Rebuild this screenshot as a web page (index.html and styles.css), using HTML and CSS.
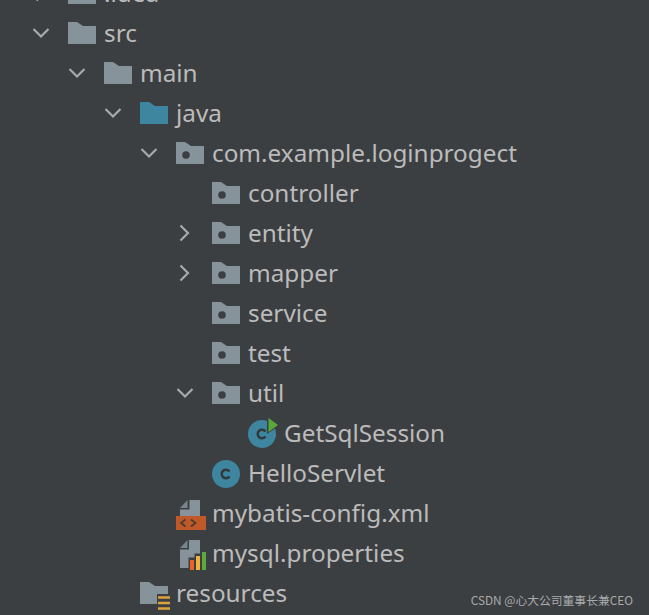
FILE: index.html
```html
<!DOCTYPE html>
<html lang="en">
<head>
    <meta charset="UTF-8">
    <meta name="viewport" content="width=device-width, initial-scale=1.0">
    <title>Project tree</title>
    <link rel="stylesheet" href="styles.css">
</head>
<body>
    <svg class="defs" width="0" height="0">
        <symbol id="down" viewBox="0 0 18 12"><path d="M1.500 2 9 9.500 16.500 2" fill="none" stroke="currentColor" stroke-width="2.200"/></symbol>
        <symbol id="right" viewBox="0 0 12 18"><path d="M1.500 1.500 9 9 1.500 16.500" fill="none" stroke="currentColor" stroke-width="2.200"/></symbol>
        <symbol id="folder" viewBox="0 0 28 22"><path d="M0 0H9L15 4H28V22H0Z" fill="currentColor"/></symbol>
        <symbol id="package" viewBox="0 0 28 22"><path d="M0 0H9L15 4H28V22H0Z" fill="currentColor"/><circle cx="10" cy="13" r="3.800" fill="#3c3f41"/></symbol>
        <symbol id="class" viewBox="0 0 28 28"><circle cx="14" cy="14" r="14" fill="#3e86a0"/><path d="M17.500 11.500A4.300 4.300 0 1 0 17.500 16.500" fill="none" stroke="#33383b" stroke-width="2.500"/></symbol>
    </svg>

    <ul class="tree">
        <li class="row" style="padding-left: 32px"><svg class="chevron-right"><use href="#right"/></svg><svg class="folder"><use href="#folder"/></svg><span>.idea</span></li>
        <li class="row" style="padding-left: 32px"><svg class="chevron-down"><use href="#down"/></svg><svg class="folder"><use href="#folder"/></svg><span>src</span></li>
        <li class="row" style="padding-left: 68px"><svg class="chevron-down"><use href="#down"/></svg><svg class="folder"><use href="#folder"/></svg><span>main</span></li>
        <li class="row" style="padding-left: 104px"><svg class="chevron-down"><use href="#down"/></svg><svg class="folder blue"><use href="#folder"/></svg><span>java</span></li>
        <li class="row" style="padding-left: 140px"><svg class="chevron-down"><use href="#down"/></svg><svg class="folder"><use href="#package"/></svg><span>com.example.loginprogect</span></li>
        <li class="row" style="padding-left: 176px"><i class="no-chevron"></i><svg class="folder"><use href="#package"/></svg><span>controller</span></li>
        <li class="row" style="padding-left: 176px"><svg class="chevron-right"><use href="#right"/></svg><svg class="folder"><use href="#package"/></svg><span>entity</span></li>
        <li class="row" style="padding-left: 176px"><svg class="chevron-right"><use href="#right"/></svg><svg class="folder"><use href="#package"/></svg><span>mapper</span></li>
        <li class="row" style="padding-left: 176px"><i class="no-chevron"></i><svg class="folder"><use href="#package"/></svg><span>service</span></li>
        <li class="row" style="padding-left: 176px"><i class="no-chevron"></i><svg class="folder"><use href="#package"/></svg><span>test</span></li>
        <li class="row" style="padding-left: 176px"><svg class="chevron-down"><use href="#down"/></svg><svg class="folder"><use href="#package"/></svg><span>util</span></li>
        <li class="row" style="padding-left: 212px"><i class="no-chevron"></i>
            <svg class="icon" viewBox="0 0 32 32"><use href="#class" width="28" height="28" y="3"/><path d="M19 -1 32 8 19 17Z" fill="#3c3f41"/><path d="M20.500 1 30 8 20.500 15Z" fill="#59a83c"/></svg>
            <span>GetSqlSession</span></li>
        <li class="row" style="padding-left: 176px"><i class="no-chevron"></i><svg class="icon" viewBox="0 0 32 32"><use href="#class" width="28" height="28" y="3"/></svg><span>HelloServlet</span></li>
        <li class="row" style="padding-left: 140px"><i class="no-chevron"></i>
            <svg class="icon" viewBox="0 0 32 32">
                <path d="M4 11 11.500 3V11Z" fill="#78848b"/>
                <path d="M13.500 3H24V19H4V12.500H13.500Z" fill="#87939a"/>
                <rect y="19" width="30" height="14" fill="#c0592a"/>
                <path d="M9.500 22.500 5 26 9.500 29.500M15 22.500 19.500 26 15 29.500" fill="none" stroke="#4f3a2d" stroke-width="1.800"/>
            </svg>
            <span>mybatis-config.xml</span></li>
        <li class="row" style="padding-left: 140px"><i class="no-chevron"></i>
            <svg class="icon" viewBox="0 0 32 32">
                <path d="M4 11 11.500 3V11Z" fill="#78848b"/>
                <path d="M13 3H24V16.500H18.500V20.500H12.500V31H4V12.500H13Z" fill="#87939a"/>
                <rect x="14" y="23" width="4" height="10" fill="#e8622a"/>
                <rect x="20" y="19" width="4" height="14" fill="#f0b23c"/>
                <rect x="26" y="15" width="4" height="18" fill="#5da83f"/>
            </svg>
            <span>mysql.properties</span></li>
        <li class="row" style="padding-left: 104px"><i class="no-chevron"></i>
            <svg class="icon" viewBox="0 0 32 32">
                <path d="M0 5H9L15 9H28V17H17V27H0Z" fill="#87939a"/>
                <path d="M18 20.500H30M18 26H30M18 31.500H30" fill="none" stroke="#dba23e" stroke-width="2.600"/>
            </svg>
            <span>resources</span></li>
    </ul>

    <div class="watermark">CSDN @心大公司董事长兼CEO</div>
</body>
</html>
```

FILE: styles.css
```css
html, body {
    height: 100%;
}
body {
    margin: 0;
    background-color: #3c3f41;
    font-family: "Noto Sans", "Open Sans", sans-serif;
    overflow: hidden;
    position: relative;
}
.defs {
    position: absolute;
}
.tree {
    list-style: none;
    margin: -27px 0 0;
    padding: 0;
}
.row {
    display: flex;
    align-items: center;
    height: 40px;
    font-size: 24.3px;
    color: #bbbbbb;
    white-space: nowrap;
}
.row span {
    margin-bottom: 2px;
}
.chevron-down {
    width: 18px;
    height: 12px;
    margin-right: 18px;
    color: #a9a9a9;
}
.chevron-right {
    width: 12px;
    height: 18px;
    margin: 0 21px 0 3px;
    color: #a9a9a9;
}
.no-chevron {
    width: 36px;
    flex: none;
}
.folder {
    width: 28px;
    height: 22px;
    margin-right: 8px;
    color: #87939a;
}
.folder.blue {
    color: #3e86a0;
}
.icon {
    width: 32px;
    height: 32px;
    margin-right: 4px;
    overflow: visible;
}
.watermark {
    position: absolute;
    right: 16px;
    bottom: 7px;
    font-family: "Noto Sans CJK SC", sans-serif;
    font-size: 11.8px;
    color: #a8aaab;
}
```
